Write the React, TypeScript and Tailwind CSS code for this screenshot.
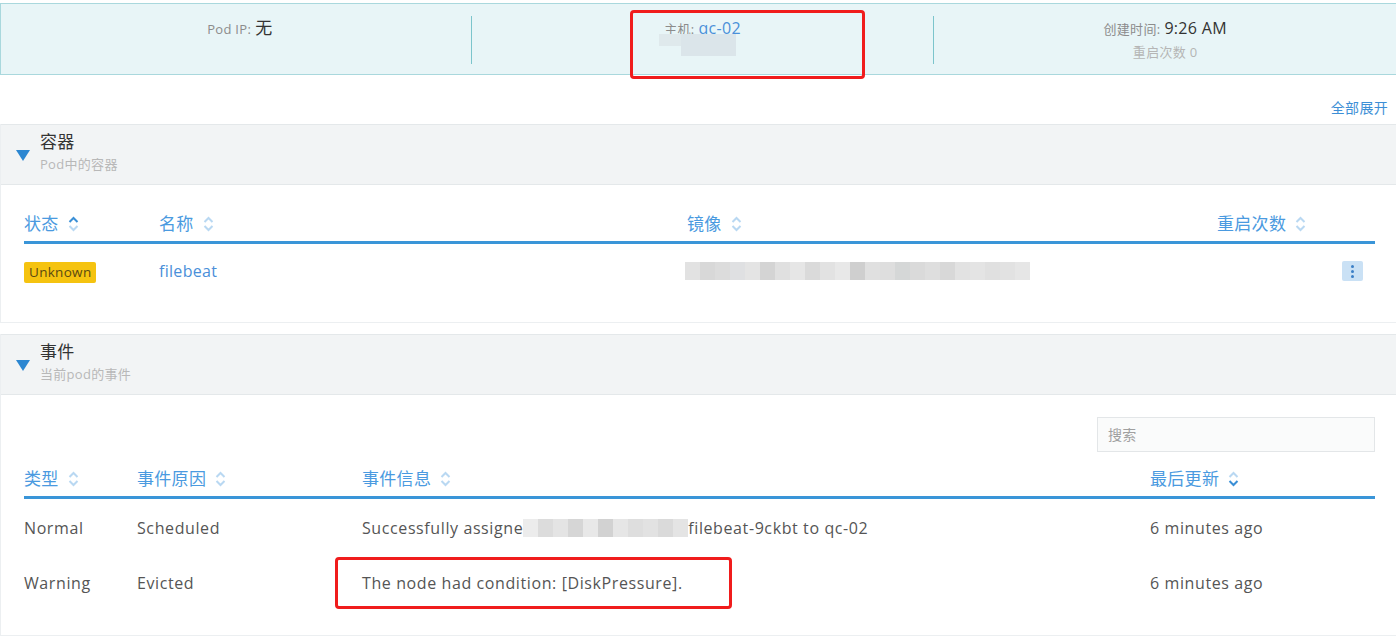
import React from "react";

const SortIcon = ({ active }: { active?: "up" | "down" }) => (
  <svg width="11" height="18" viewBox="0 0 11 18" className="ml-[9px] inline-block">
    <path
      d="M1.5 7 L5.5 3 L9.5 7"
      fill="none"
      stroke={active === "up" ? "#3a8fd6" : "#b9d8f2"}
      strokeWidth="2"
    />
    <path
      d="M1.5 11 L5.5 15 L9.5 11"
      fill="none"
      stroke={active === "down" ? "#3a8fd6" : "#b9d8f2"}
      strokeWidth="2"
    />
  </svg>
);

const Triangle = () => (
  <svg width="14" height="11" viewBox="0 0 14 11" className="shrink-0">
    <path d="M0 0 L14 0 L7 11 Z" fill="#2b86d1" />
  </svg>
);

const Blur = ({ shades }: { shades: string[] }) => (
  <div className="flex h-[18px]">
    {shades.map((s, i) => (
      <div key={i} className="h-full w-[15px]" style={{ background: s }} />
    ))}
  </div>
);

const SectionHeader = ({ title, sub }: { title: string; sub: string }) => (
  <div className="flex h-[61px] items-start border-y border-[#e4e8ea] bg-[#f2f4f5]">
    <div className="ml-[15px] mt-[25px]">
      <Triangle />
    </div>
    <div className="ml-[10px] flex flex-col pt-[7px]">
      <span className="text-[17px] leading-[20px] text-[#333]">{title}</span>
      <span className="mt-[4px] text-[13px] leading-[16px] text-[#b8b8b8]">{sub}</span>
    </div>
  </div>
);

const App = () => {
  const imgShades = [
    "#e2e2e2", "#d8d8d8", "#dcdcdc", "#dfe0e2", "#e4e4e4", "#d4d4d4", "#e0e0e0", "#e6e6e6",
    "#dadada", "#e2e2e2", "#e8e8e8", "#cfcfcf", "#e0e0e0", "#dedede", "#d5d7d7", "#dadada",
    "#dedede", "#d8d8d8", "#e2e2e2", "#e4e4e4", "#e0e0e0", "#e2e2e2", "#e6e6e6",
  ];
  const evShades = [
    "#ececec", "#dcdcdc", "#e4e4e4", "#d6d6d6", "#e8e8e8", "#d2d2d2", "#e6e6e6", "#dedede",
    "#e2e2e2", "#dadada", "#e4e4e4",
  ];

  return (
    <div className="relative min-h-screen w-full overflow-hidden bg-white font-['Open_Sans','Noto_Sans_CJK_SC',sans-serif] tracking-[0.3px]">
      {/* summary bar */}
      <div className="mt-[3px] flex h-[72px] border-y border-l border-[#a9d8dd] bg-[#e8f5f7]">
        <div className="flex flex-1 items-baseline justify-center pt-[14px] pl-[8px]">
          <span className="text-[13px] text-[#8c8c8c]">Pod IP: </span>
          <span className="ml-[4px] text-[17px] leading-[20px] text-[#333]">无</span>
        </div>
        <div className="mt-[12px] h-[48px] w-px bg-[#7cc5cc]" />
        <div className="flex flex-1 flex-col items-center pt-[14px]">
          <div className="flex items-baseline">
            <span className="text-[13px] text-[#8c8c8c]">主机: </span>
            <span className="ml-[4px] text-[16px] leading-[20px] text-[#4a90d9]">qc-02</span>
          </div>
          <div className="ml-[-10px] mt-[-6px] flex">
            <div className="h-[12px] w-[22px] bg-[#dfe9ec]" />
            <div className="h-[22px] w-[55px] bg-[#dbe5ea]" />
          </div>
        </div>
        <div className="mt-[12px] h-[48px] w-px bg-[#7cc5cc]" />
        <div className="flex flex-1 flex-col items-center pt-[14px]">
          <div className="flex items-baseline">
            <span className="text-[13px] text-[#8c8c8c]">创建时间: </span>
            <span className="ml-[4px] text-[16px] leading-[20px] text-[#333]">9:26 AM</span>
          </div>
          <span className="mt-[3px] text-[13px] text-[#b5b5b5]">重启次数 0</span>
        </div>
      </div>

      <div className="flex justify-end pr-[8px] pt-[23px] pb-[6px]">
        <span className="text-[14px] leading-[20px] text-[#3d8fd6]">全部展开</span>
      </div>

      {/* containers */}
      <div className="border-b border-l border-[#eceff1]">
        <SectionHeader title="容器" sub="Pod中的容器" />
        <div className="pl-[23px] pr-[21px] pt-[28px]">
          <div className="grid grid-cols-[135px_528px_530px_1fr] border-b-[3px] border-[#3a95d8] pb-[6px] text-[17px] leading-[22px] text-[#4a9ae0]">
            <div className="flex items-center">状态<SortIcon active="up" /></div>
            <div className="flex items-center">名称<SortIcon /></div>
            <div className="flex items-center">镜像<SortIcon /></div>
            <div className="flex items-center">重启次数<SortIcon /></div>
          </div>
          <div className="grid h-[54px] grid-cols-[135px_528px_530px_1fr] items-center">
            <div>
              <span className="inline-flex h-[21px] items-center rounded-[2px] bg-[#f5c310] px-[5px] text-[13.5px] text-[#5a4a12]">
                Unknown
              </span>
            </div>
            <div className="text-[16px] text-[#4a8fd9]">filebeat</div>
            <div className="-ml-[2px]">
              <Blur shades={imgShades} />
            </div>
            <div className="flex justify-end pr-[12px]">
              <div className="flex h-[20px] w-[21px] flex-col items-center justify-center gap-[2px] rounded-[2px] bg-[#cae1f5]">
                <span className="h-[3px] w-[3px] rounded-full bg-[#3b7fc6]" />
                <span className="h-[3px] w-[3px] rounded-full bg-[#3b7fc6]" />
                <span className="h-[3px] w-[3px] rounded-full bg-[#3b7fc6]" />
              </div>
            </div>
          </div>
          <div className="h-[24px]" />
        </div>
      </div>

      {/* events */}
      <div className="mt-[11px] border-b border-l border-[#eceff1]">
        <SectionHeader title="事件" sub="当前pod的事件" />
        <div className="pl-[23px] pr-[21px] pt-[22px]">
          <div className="flex justify-end">
            <div className="flex h-[35px] w-[278px] items-center border border-[#e3e6e8] bg-[#fafbfb] px-[10px] text-[14px] text-[#a0a0a0]">
              搜索
            </div>
          </div>
          <div className="mt-[16px] grid grid-cols-[113px_225px_788px_1fr] border-b-[3px] border-[#3a95d8] pb-[6px] text-[17px] leading-[22px] text-[#4a9ae0]">
            <div className="flex items-center">类型<SortIcon /></div>
            <div className="flex items-center">事件原因<SortIcon /></div>
            <div className="flex items-center">事件信息<SortIcon /></div>
            <div className="flex items-center">最后更新<SortIcon active="down" /></div>
          </div>
          <div className="pt-[1px] text-[16px] tracking-[0.6px] text-[#555]">
            <div className="grid h-[55px] grid-cols-[113px_225px_788px_1fr] items-center">
              <div>Normal</div>
              <div>Scheduled</div>
              <div className="flex items-center">
                Successfully assigne
                <Blur shades={evShades} />
                filebeat-9ckbt to qc-02
              </div>
              <div>6 minutes ago</div>
            </div>
            <div className="grid h-[55px] grid-cols-[113px_225px_788px_1fr] items-center">
              <div>Warning</div>
              <div>Evicted</div>
              <div>The node had condition: [DiskPressure].</div>
              <div>6 minutes ago</div>
            </div>
          </div>
          <div className="h-[25px]" />
        </div>
      </div>

      {/* screenshot annotations */}
      <div className="pointer-events-none absolute left-[630px] top-[10px] h-[69px] w-[235px] rounded-[4px] border-[3px] border-[#f01c1c]" />
      <div className="pointer-events-none absolute left-[335px] top-[557px] h-[52px] w-[397px] rounded-[4px] border-[3px] border-[#f01c1c]" />
    </div>
  );
};

export default App;
